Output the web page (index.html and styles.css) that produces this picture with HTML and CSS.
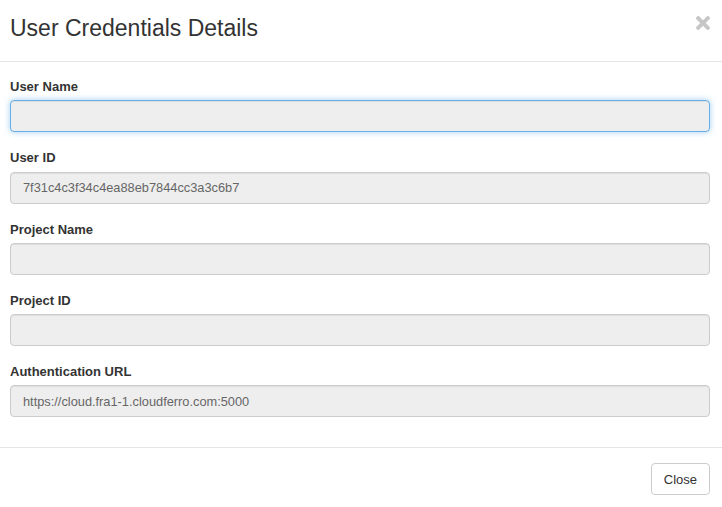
FILE: index.html
```html
<!DOCTYPE html>
<html>
<head>
<meta charset="utf-8">
<title>User Credentials Details</title>
<link rel="stylesheet" href="styles.css">
</head>
<body>
<div class="modal">
  <div class="modal-header">
    <h3 class="modal-title">User Credentials Details</h3>
    <button class="close" type="button" aria-label="Close">
      <svg width="14" height="14" viewBox="0 0 14 14"><path d="M2.2 2.2 L11.8 11.8 M11.8 2.2 L2.2 11.8" stroke="#c6c6c6" stroke-width="3.8" stroke-linecap="square"/></svg>
    </button>
  </div>
  <div class="modal-body">
    <div class="form-group">
      <label class="label">User Name</label>
      <input class="form-control focused" type="text" readonly value="">
    </div>
    <div class="form-group">
      <label class="label">User ID</label>
      <input class="form-control" type="text" readonly value="7f31c4c3f34c4ea88eb7844cc3a3c6b7">
    </div>
    <div class="form-group">
      <label class="label">Project Name</label>
      <input class="form-control" type="text" readonly value="">
    </div>
    <div class="form-group">
      <label class="label">Project ID</label>
      <input class="form-control" type="text" readonly value="">
    </div>
    <div class="form-group">
      <label class="label">Authentication URL</label>
      <input class="form-control" type="text" readonly value="https://cloud.fra1-1.cloudferro.com:5000">
    </div>
  </div>
  <div class="modal-footer">
    <button class="btn" type="button">Close</button>
  </div>
</div>
</body>
</html>
```

FILE: styles.css
```css
html, body {
  margin: 0;
  padding: 0;
  background: #fff;
}
body {
  font-family: "Liberation Sans", Arial, sans-serif;
  color: #333;
}
.modal {
  width: 722px;
}
.modal-header {
  display: flex;
  justify-content: space-between;
  align-items: flex-start;
  padding: 16px 12px 21px 10px;
  border-bottom: 1px solid #e5e5e5;
}
.modal-title {
  margin: 0;
  font-size: 23px;
  line-height: 24px;
  font-weight: normal;
  color: #333;
}
.close {
  border: 0;
  background: transparent;
  padding: 0;
  margin-top: 0;
  width: 14px;
  height: 14px;
  cursor: pointer;
  display: flex;
}
.modal-body {
  padding: 16px 12px 13px 10px;
}
.form-group {
  display: flex;
  flex-direction: column;
  margin-bottom: 17px;
}
.label {
  font-size: 13px;
  line-height: 18.25px;
  font-weight: bold;
  color: #333;
  margin-bottom: 4px;
}
.form-control {
  box-sizing: border-box;
  height: 32px;
  width: 100%;
  margin: 0;
  padding: 0 12px;
  font-family: "Liberation Sans", Arial, sans-serif;
  font-size: 12.8px;
  color: #666;
  background: #eee;
  border: 1px solid #ccc;
  border-radius: 4px;
  box-shadow: inset 0 1px 1px rgba(0, 0, 0, 0.075);
  outline: none;
}
.form-control.focused {
  border-color: #66afe9;
  box-shadow: inset 0 1px 1px rgba(0, 0, 0, 0.075), 0 0 6px rgba(102, 175, 233, 0.6);
}
.modal-footer {
  display: flex;
  justify-content: flex-end;
  padding: 15px 12px 12px 10px;
  border-top: 1px solid #e5e5e5;
}
.btn {
  box-sizing: border-box;
  height: 32px;
  padding: 0 12px;
  font-family: "Liberation Sans", Arial, sans-serif;
  font-size: 13px;
  color: #333;
  background: #fff;
  border: 1px solid #ccc;
  border-radius: 4px;
  cursor: pointer;
}
```
